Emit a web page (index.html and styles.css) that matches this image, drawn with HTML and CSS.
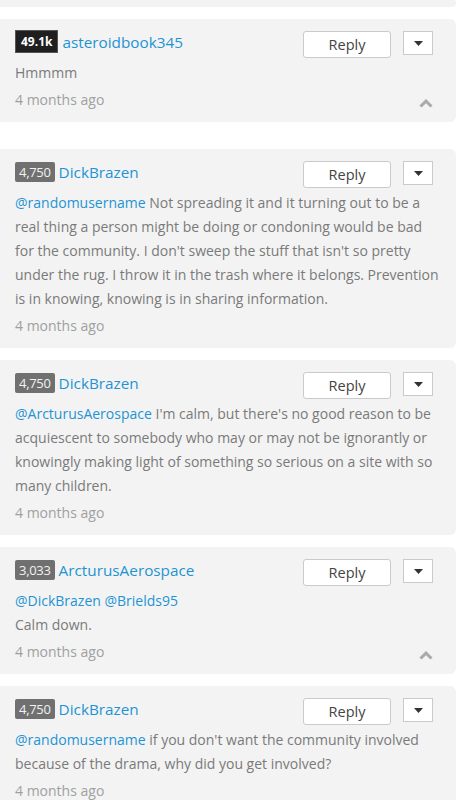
FILE: index.html
```html
<!DOCTYPE html>
<html lang="en">
<head>
<meta charset="utf-8">
<title>Comments</title>
<link rel="stylesheet" href="styles.css">
</head>
<body>
<div class="thread">
  <div class="card card-partial"></div>

  <div class="card card-end">
    <div class="head">
      <span class="badge badge-dark">49.1k</span>
      <a class="user">asteroidbook345</a>
      <div class="actions">
        <button class="reply">Reply</button>
        <button class="more"><svg width="9" height="5" viewBox="0 0 9 5"><path d="M0 0H9L4.5 5Z" fill="#333"/></svg></button>
      </div>
    </div>
    <p class="body">Hmmmm</p>
    <div class="foot">
      <span class="time">4 months ago</span>
      <svg class="collapse" width="14" height="9" viewBox="0 0 14 9"><path d="M1.5 7.5L7 2.2L12.5 7.5" fill="none" stroke="#aaa" stroke-width="3"/></svg>
    </div>
  </div>

  <div class="card">
    <div class="head">
      <span class="badge">4,750</span>
      <a class="user">DickBrazen</a>
      <div class="actions">
        <button class="reply">Reply</button>
        <button class="more"><svg width="9" height="5" viewBox="0 0 9 5"><path d="M0 0H9L4.5 5Z" fill="#333"/></svg></button>
      </div>
    </div>
    <p class="body"><a class="mention">@randomusername</a> Not spreading it and it turning out to be a<br>real thing a person might be doing or condoning would be bad<br>for the community. I don't sweep the stuff that isn't so pretty<br>under the rug. I throw it in the trash where it belongs. Prevention<br>is in knowing, knowing is in sharing information.</p>
    <div class="foot">
      <span class="time">4 months ago</span>
    </div>
  </div>

  <div class="card">
    <div class="head">
      <span class="badge">4,750</span>
      <a class="user">DickBrazen</a>
      <div class="actions">
        <button class="reply">Reply</button>
        <button class="more"><svg width="9" height="5" viewBox="0 0 9 5"><path d="M0 0H9L4.5 5Z" fill="#333"/></svg></button>
      </div>
    </div>
    <p class="body"><a class="mention">@ArcturusAerospace</a> I'm calm, but there's no good reason to be<br>acquiescent to somebody who may or may not be ignorantly or<br>knowingly making light of something so serious on a site with so<br>many children.</p>
    <div class="foot">
      <span class="time">4 months ago</span>
    </div>
  </div>

  <div class="card">
    <div class="head">
      <span class="badge">3,033</span>
      <a class="user">ArcturusAerospace</a>
      <div class="actions">
        <button class="reply">Reply</button>
        <button class="more"><svg width="9" height="5" viewBox="0 0 9 5"><path d="M0 0H9L4.5 5Z" fill="#333"/></svg></button>
      </div>
    </div>
    <p class="body"><a class="mention">@DickBrazen</a> <a class="mention">@Brields95</a></p>
    <p class="body body-next">Calm down.</p>
    <div class="foot">
      <span class="time">4 months ago</span>
      <svg class="collapse" width="14" height="9" viewBox="0 0 14 9"><path d="M1.5 7.5L7 2.2L12.5 7.5" fill="none" stroke="#aaa" stroke-width="3"/></svg>
    </div>
  </div>

  <div class="card">
    <div class="head">
      <span class="badge">4,750</span>
      <a class="user">DickBrazen</a>
      <div class="actions">
        <button class="reply">Reply</button>
        <button class="more"><svg width="9" height="5" viewBox="0 0 9 5"><path d="M0 0H9L4.5 5Z" fill="#333"/></svg></button>
      </div>
    </div>
    <p class="body"><a class="mention">@randomusername</a> if you don't want the community involved<br>because of the drama, why did you get involved?</p>
    <div class="foot">
      <span class="time">4 months ago</span>
    </div>
  </div>
</div>
</body>
</html>
```

FILE: styles.css
```css
* { box-sizing: border-box; }

html, body {
  margin: 0;
  padding: 0;
  background: #ffffff;
  font-family: "Open Sans", "Liberation Sans", sans-serif;
  overflow: hidden;
}

.thread {
  display: flex;
  flex-direction: column;
  gap: 12px;
  padding-right: 4px;
}

.card {
  background: #f3f3f3;
  border-radius: 0 6px 6px 0;
  padding: 12px 23px 10px 15px;
}

.card-partial {
  height: 8px;
  padding: 0;
  margin-top: -1px;
}

.card-end {
  margin-bottom: 15px;
}

.head {
  display: flex;
  align-items: flex-start;
  height: 27px;
}

.badge {
  display: inline-flex;
  align-items: center;
  height: 20px;
  margin-top: 1px;
  padding: 0 4px;
  background: #707070;
  color: #f2f2f2;
  font-size: 13px;
  border-radius: 2px;
  letter-spacing: -0.3px;
}

.badge-dark {
  height: 23px;
  margin-top: -1px;
  padding: 0 5px;
  background: #1f1f1f;
  border: 1px solid #555;
  border-radius: 0;
  color: #fff;
  font-weight: 700;
  font-size: 12px;
  letter-spacing: 0;
}

.user {
  margin-left: 4px;
  color: #1e93d4;
  font-size: 15.3px;
  line-height: 22px;
  text-decoration: none;
}

.actions {
  margin-left: auto;
  display: flex;
  align-items: flex-start;
  gap: 12px;
}

.reply {
  width: 88px;
  height: 27px;
  padding: 0;
  background: #fff;
  border: 1px solid #cacaca;
  border-radius: 3px;
  color: #444;
  font-family: inherit;
  font-size: 14.5px;
  line-height: 25px;
}

.more {
  width: 30px;
  height: 24px;
  padding: 1px 0 0;
  background: #fff;
  border: 1px solid #cacaca;
  border-radius: 0;
  display: flex;
  align-items: center;
  justify-content: center;
}

.more svg { display: block; }

.body {
  margin: 3px -14px 0 0;
  color: #7a7a7a;
  font-size: 14px;
  line-height: 24px;
}

.body-next { margin-top: 0; }

.mention {
  color: #1e93d4;
  text-decoration: none;
}

.foot {
  margin-top: 3px;
  display: flex;
  align-items: center;
  justify-content: space-between;
  height: 24px;
}

.time {
  color: #a0a0a0;
  font-size: 14px;
  line-height: 24px;
}

.collapse {
  display: block;
  margin-top: 6px;
}
```
